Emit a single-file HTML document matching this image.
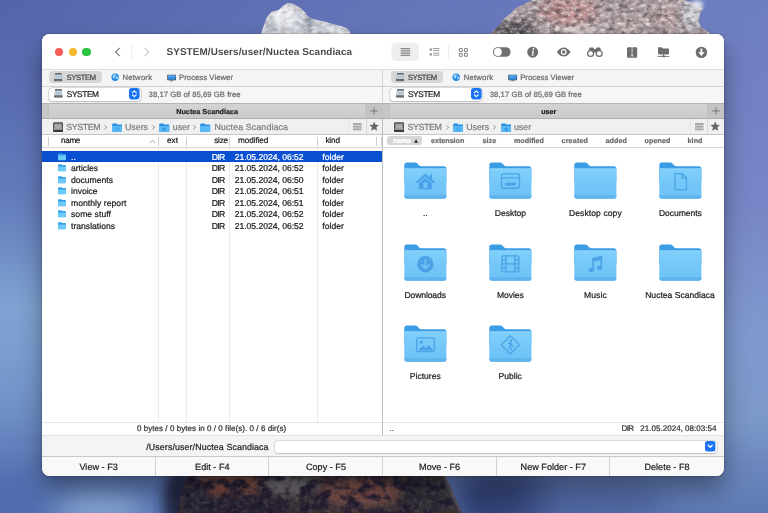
<!DOCTYPE html>
<html>
<head>
<meta charset="utf-8">
<style>
*{box-sizing:border-box;margin:0;padding:0}
html,body{width:768px;height:513px;overflow:hidden;background:#5c70b4}
body{font-family:"Liberation Sans",sans-serif;position:relative;color:#222;-webkit-text-stroke:0.22px;text-rendering:geometricPrecision}
#bg{position:absolute;left:0;top:0;width:768px;height:513px}
#win{position:absolute;left:42px;top:34px;width:682px;height:442.4px;border-radius:7.5px;background:#f4f4f4;overflow:hidden;will-change:transform;
 box-shadow:0 0 0 0.5px rgba(0,0,0,.20),0 14px 24px rgba(0,0,0,.36),0 1px 5px rgba(0,0,0,.10)}
.a{position:absolute}
</style>
</head>
<body>
<svg id="bg" width="768" height="513" viewBox="0 0 768 513">
<defs>
<linearGradient id="skyL" x1="0" y1="0" x2="0" y2="1">
<stop offset="0" stop-color="#5565ab"/><stop offset="0.2" stop-color="#5a6db2"/><stop offset="0.4" stop-color="#657dbc"/><stop offset="0.6" stop-color="#7fa4d3"/><stop offset="0.7" stop-color="#7a9dd0"/><stop offset="0.8" stop-color="#7090c8"/><stop offset="0.93" stop-color="#5773b3"/><stop offset="1" stop-color="#5370b2"/>
</linearGradient>
<linearGradient id="skyR" x1="0" y1="0" x2="0" y2="1">
<stop offset="0" stop-color="#6e7ec0"/><stop offset="0.4" stop-color="#7886c6"/><stop offset="0.66" stop-color="#8099ce"/><stop offset="0.82" stop-color="#7c98c8"/><stop offset="0.9" stop-color="#6d88be"/><stop offset="1" stop-color="#607bb3"/>
</linearGradient>
<linearGradient id="hm" x1="0" y1="0" x2="1" y2="0">
<stop offset="0" stop-color="#fff" stop-opacity="0"/><stop offset="0.5" stop-color="#fff" stop-opacity="0.6"/><stop offset="1" stop-color="#fff" stop-opacity="1"/>
</linearGradient>
<mask id="mR"><rect width="768" height="513" fill="url(#hm)"/></mask>
<filter color-interpolation-filters="sRGB" id="spkW" x="0" y="0" width="100%" height="100%">
<feTurbulence type="fractalNoise" baseFrequency="0.18 0.26" numOctaves="4" seed="7" result="n"/>
<feColorMatrix in="n" type="matrix" values="0 0 0 0 1  0 0 0 0 1  0 0 0 0 1  2.2 0 0 0 -0.95"/>
</filter>
<filter color-interpolation-filters="sRGB" id="spkD" x="0" y="0" width="100%" height="100%">
<feTurbulence type="fractalNoise" baseFrequency="0.16 0.22" numOctaves="4" seed="11" result="n"/>
<feColorMatrix in="n" type="matrix" values="0 0 0 0 0.16  0 0 0 0 0.14  0 0 0 0 0.18  0 2.4 0 0 -0.95"/>
</filter>
<filter color-interpolation-filters="sRGB" id="blobD" x="0" y="0" width="100%" height="100%">
<feTurbulence type="fractalNoise" baseFrequency="0.07 0.1" numOctaves="3" seed="5" result="n"/>
<feColorMatrix in="n" type="matrix" values="0 0 0 0 0.13  0 0 0 0 0.11  0 0 0 0 0.19  4.5 0 0 0 -1.9"/>
</filter>
<filter color-interpolation-filters="sRGB" id="spkL" x="0" y="0" width="100%" height="100%">
<feTurbulence type="fractalNoise" baseFrequency="0.22" numOctaves="3" seed="21" result="n"/>
<feColorMatrix in="n" type="matrix" values="0 0 0 0 0.62  0 0 0 0 0.56  0 0 0 0 0.56  0 0 2.4 0 -1.1"/>
</filter>
<filter id="b2" x="-100%" y="-100%" width="300%" height="300%"><feGaussianBlur stdDeviation="2"/></filter>
<filter id="b4" x="-100%" y="-100%" width="300%" height="300%"><feGaussianBlur stdDeviation="4"/></filter>
<filter id="b6" x="-100%" y="-100%" width="300%" height="300%"><feGaussianBlur stdDeviation="6"/></filter>
<filter id="b12" x="-100%" y="-100%" width="300%" height="300%"><feGaussianBlur stdDeviation="14"/></filter>
<clipPath id="cRockL"><polygon points="260,36 261.5,33 263,28 264.5,24 266.5,18 269,14.5 271.5,12 275,11 278.7,10.3 281,8 283.7,5.5 286,4 288.7,3.3 291.5,3.6 294.4,4.6 297,6 300,7.8 302.5,9.8 305,12.2 307,15 308.7,17.2 311.5,18.4 314.5,19.2 319,20.4 324.5,21.6 330,23.2 336,25 340,26 344.5,27.2 347,28.6 348.8,30.2 350,32.5 350.6,36"/></clipPath>
<clipPath id="cRockR"><polygon points="489,36 491,33.5 495,29.5 499.6,25 502,21.5 504.3,18.5 508,15.5 511.3,13 513.5,10.5 515.3,8.5 519,6.6 523,5 527,2.8 531,0.6 533,0 684.4,0 690,2 697,4.5 703,8 701,11 700,14 699,18 699,22 700,25 701.5,28 705,30 709,32 710,36"/></clipPath>
<clipPath id="cRockB"><polygon points="188,474 444,474 447,480 452,490 455,498 459,506 462,513 178,513 180,500 184,486"/></clipPath>
</defs>
<rect width="768" height="513" fill="url(#skyL)"/>
<rect width="768" height="513" fill="url(#skyR)" mask="url(#mR)"/>
<!-- bottom glow / dark areas -->
<ellipse cx="100" cy="510" rx="48" ry="20" fill="#8eacd6" opacity="0.85" filter="url(#b12)"/>
<ellipse cx="14" cy="496" rx="22" ry="16" fill="#4661a8" opacity="0.5" filter="url(#b12)"/>
<ellipse cx="500" cy="502" rx="48" ry="30" fill="#2b376a" opacity="0.92" filter="url(#b12)"/>
<ellipse cx="585" cy="504" rx="85" ry="20" fill="#43558e" opacity="0.6" filter="url(#b12)"/>
<ellipse cx="180" cy="500" rx="17" ry="30" fill="#24283f" opacity="0.97" filter="url(#b6)"/>
<!-- top-left rock -->
<g clip-path="url(#cRockL)">
 <rect x="255" y="0" width="100" height="40" fill="#d3d6de"/>
 <ellipse cx="284" cy="16" rx="12" ry="11" fill="#eceef3" filter="url(#b2)"/>
 <ellipse cx="270" cy="28" rx="7" ry="8" fill="#c2c6d0" filter="url(#b2)"/>
 <ellipse cx="330" cy="30" rx="16" ry="4" fill="#e2e4ea" filter="url(#b2)"/>
 <path d="M303 12 L307 20 L306 28 L309 36 L312 36 L311 26 L312 20 Z" fill="#707888" filter="url(#b2)" opacity="0.85"/>
 <path d="M318 24 L320 36 L322 36 L321 26 Z" fill="#8c94a4" filter="url(#b2)" opacity="0.7"/>
 <rect x="255" y="0" width="100" height="40" filter="url(#spkW)" opacity="0.7"/>
 <rect x="255" y="0" width="100" height="40" filter="url(#spkD)" opacity="0.22"/>
</g>
<!-- top-right rock -->
<g clip-path="url(#cRockR)">
 <rect x="485" y="0" width="230" height="40" fill="#b3a3a5"/>
 <ellipse cx="516" cy="29" rx="24" ry="10" fill="#5f575b" filter="url(#b4)"/>
 <ellipse cx="508" cy="15" rx="9" ry="4" fill="#c4b8bb" filter="url(#b2)"/>
 <ellipse cx="568" cy="12" rx="30" ry="14" fill="#c09292" filter="url(#b4)"/>
 <ellipse cx="582" cy="31" rx="24" ry="5" fill="#d6c8c8" filter="url(#b2)"/>
 <ellipse cx="545" cy="30" rx="9" ry="5" fill="#c8baba" filter="url(#b2)"/>
 <ellipse cx="630" cy="22" rx="16" ry="9" fill="#c4b0b0" filter="url(#b4)"/>
 <ellipse cx="668" cy="16" rx="14" ry="8" fill="#c2a6a6" filter="url(#b4)"/>
 <ellipse cx="692" cy="14" rx="11" ry="16" fill="#cfcfd6" filter="url(#b4)"/>
 <g fill="none" stroke="#4e4448" stroke-width="1.2" opacity="0.75" filter="url(#b2)">
  <path d="M610 0 L612 12 L611 24 L613 36"/><path d="M628 4 L632 16 L640 24 L641 36"/><path d="M650 0 L648 12 L655 22 L660 36"/><path d="M551 2 L547 14 L541 26 L540 36"/><path d="M676 6 L680 20 L686 34"/>
 </g>
 <rect x="485" y="0" width="230" height="40" filter="url(#spkW)" opacity="0.8"/>
 <rect x="485" y="0" width="230" height="40" filter="url(#spkD)" opacity="0.5"/>
</g>
<ellipse cx="697" cy="5" rx="6" ry="4.5" fill="#e8ecf4" opacity="0.95" filter="url(#b2)"/>
<!-- bottom rock -->
<g clip-path="url(#cRockB)">
 <rect x="170" y="470" width="300" height="45" fill="#393036"/>
 <ellipse cx="228" cy="486" rx="36" ry="10" fill="#7c4a3e" filter="url(#b4)"/>
 <ellipse cx="290" cy="486" rx="30" ry="10" fill="#6c696e" filter="url(#b4)"/>
 <ellipse cx="360" cy="492" rx="40" ry="14" fill="#7a4e46" filter="url(#b4)"/>
 <ellipse cx="428" cy="494" rx="22" ry="22" fill="#323238" filter="url(#b4)"/>
 <ellipse cx="240" cy="508" rx="50" ry="10" fill="#262034" filter="url(#b4)"/>
 <ellipse cx="196" cy="500" rx="12" ry="20" fill="#2c2a3a" filter="url(#b4)"/>
 <rect x="170" y="470" width="300" height="45" filter="url(#blobD)" opacity="0.95"/>
 <rect x="170" y="470" width="300" height="45" filter="url(#spkL)" opacity="0.26"/>
 <path d="M444,474 L447,480 452,490 455,498 459,506 462,513" fill="none" stroke="#8a8286" stroke-width="3" filter="url(#b2)"/>
</g>
</svg>

<svg width="0" height="0" style="position:absolute">
<defs>

<linearGradient id="fb" x1="0" y1="0" x2="0" y2="1"><stop offset="0" stop-color="#80d0fb"/><stop offset="0.5" stop-color="#74c7f8"/><stop offset="1" stop-color="#6cc1f6"/></linearGradient>
<symbol id="bigfold" viewBox="0 0 43 37">
 <path d="M0.3 3 Q0.3 0.3 3 0.3 L11 0.3 Q12.6 0.3 13.6 1.5 L15.3 3.4 Q16.1 4.2 17.5 4.2 L39.8 4.2 Q42.7 4.2 42.7 7.2 L42.7 20 L0.3 20 Z" fill="#3b9de5"/>
 <path d="M0.3 8 Q0.3 6.4 1.9 6.4 L41.1 6.4 Q42.7 6.4 42.7 8 L42.7 34 Q42.7 36.8 39.9 36.8 L3.1 36.8 Q0.3 36.8 0.3 34 Z" fill="url(#fb)"/>
 <path d="M0.3 33.4 L42.7 33.4 L42.7 34 Q42.7 36.8 39.9 36.8 L3.1 36.8 Q0.3 36.8 0.3 34 Z" fill="#5fb3ef"/>
 <rect x="0.3" y="6.4" width="42.4" height="0.7" rx="0.35" fill="#a4defc" opacity="0.8"/>
</symbol>
<symbol id="g-none" viewBox="0 0 43 37"></symbol>
<symbol id="g-home" viewBox="0 0 43 37"><g fill="#4aa3e6"><path d="M21.5 13.2 L12.6 21.2 L14 22.6 L21.5 16 L29 22.6 L30.4 21.2 L27.6 18.6 L27.6 14.4 L25.6 14.4 L25.6 16.8 Z"/><path d="M15.4 22.4 L21.5 17.2 L27.6 22.4 L27.6 28 L15.4 28 Z M19.8 21.6 L19.8 26.6 L23.2 26.6 L23.2 21.6 Z" fill-rule="evenodd"/></g></symbol>
<symbol id="g-desktop" viewBox="0 0 43 37"><g fill="none" stroke="#4aa3e6" stroke-width="1.2"><rect x="13.2" y="13.6" width="16.8" height="13.4" rx="2"/><path d="M13.2 17.4 H30"/></g><rect x="16.6" y="21.8" width="10" height="2.6" rx="0.6" fill="#4aa3e6"/></symbol>
<symbol id="g-doc" viewBox="0 0 43 37"><path d="M16.4 13.4 L23.2 13.4 L27.2 17.4 L27.2 27.6 Q27.2 28.6 26.2 28.6 L17.4 28.6 Q16.4 28.6 16.4 27.6 Z M23 13.6 L23 17.6 L27 17.6" fill="none" stroke="#4aa3e6" stroke-width="1.2" stroke-linejoin="round"/></symbol>
<symbol id="g-down" viewBox="0 0 43 37"><circle cx="21.5" cy="21.4" r="7.6" fill="#4aa3e6"/><path d="M21.5 17 V25 M18.2 22 L21.5 25.3 L24.8 22" fill="none" stroke="#74c3f6" stroke-width="1.6" stroke-linecap="round" stroke-linejoin="round"/></symbol>
<symbol id="g-movie" viewBox="0 0 43 37"><g fill="none" stroke="#4aa3e6" stroke-width="1.2"><rect x="13.6" y="13.6" width="15.8" height="15" rx="1.6"/><path d="M17.4 13.6 V28.6 M25.6 13.6 V28.6 M17.4 21.1 H25.6 M13.6 17.4 H17.4 M13.6 21.1 H17.4 M13.6 24.8 H17.4 M25.6 17.4 H29.4 M25.6 21.1 H29.4 M25.6 24.8 H29.4"/></g></symbol>
<symbol id="g-music" viewBox="0 0 43 37"><g fill="#4aa3e6"><path d="M18.6 15.6 L27.8 13.4 L27.8 24.6 L26.2 24.6 L26.2 17.4 L20.2 18.8 L20.2 26.6 L18.6 26.6 Z"/><ellipse cx="17.8" cy="26.6" rx="2.5" ry="2"/><ellipse cx="25.4" cy="24.6" rx="2.5" ry="2"/></g></symbol>
<symbol id="g-pic" viewBox="0 0 43 37"><rect x="13.4" y="14.6" width="16.4" height="12.8" rx="1.6" fill="none" stroke="#4aa3e6" stroke-width="1.2"/><circle cx="17.6" cy="18.6" r="1.5" fill="#4aa3e6"/><path d="M14.6 26.2 L19.4 21.6 L22 24 L24.6 21 L28.8 26.2 Z" fill="#4aa3e6"/></symbol>
<symbol id="g-public" viewBox="0 0 43 37"><path d="M21.5 12.6 L30 21.1 L21.5 29.6 L13 21.1 Z" fill="none" stroke="#4aa3e6" stroke-width="1.2" stroke-linejoin="round"/><circle cx="22.2" cy="17.2" r="1.1" fill="#4aa3e6"/><path d="M19.6 20 L21.8 18.8 L22.6 21.4 L24.4 22.4 M21.8 19 L21.2 22.4 L22.6 24 L22.4 26.2 M21.2 22.4 L19.6 25.4" fill="none" stroke="#4aa3e6" stroke-width="1" stroke-linecap="round"/></symbol>
<symbol id="i-hdd" viewBox="0 0 10 10">
 <rect x="0.1" y="0.2" width="9.8" height="9.6" rx="1.3" fill="#474747"/>
 <rect x="1" y="1.2" width="8" height="5.4" rx="0.7" fill="#858585"/>
 <rect x="1.9" y="2.4" width="6.2" height="3.4" rx="0.4" fill="#a9adb2"/>
 <rect x="0.9" y="6.2" width="8.2" height="1.5" fill="#b4c0c8"/>
 <rect x="0.1" y="7.7" width="9.8" height="2.1" rx="1" fill="#3a3a3a"/>
</symbol>


<symbol id="i-fold-users" viewBox="0 0 10 10" preserveAspectRatio="none">
 <path d="M0.2 1.4 Q0.2 0.4 1.2 0.4 L3.6 0.4 Q4.1 0.4 4.5 0.9 L5 1.5 L8.8 1.5 Q9.8 1.5 9.8 2.5 L9.8 8.6 Q9.8 9.6 8.8 9.6 L1.2 9.6 Q0.2 9.6 0.2 8.6 Z" fill="#2a8fe2"/>
 <path d="M0.2 3.2 L9.8 3.2 L9.8 8.6 Q9.8 9.6 8.8 9.6 L1.2 9.6 Q0.2 9.6 0.2 8.6 Z" fill="#5abaf6"/>
 <g fill="#2f90e4" opacity="0.85"><circle cx="4.2" cy="5.3" r="0.85"/><circle cx="6.3" cy="5.5" r="0.7"/><path d="M2.8 7.9 Q4.2 5.7 5.6 7.9 Z M5.4 7.7 Q6.4 6.3 7.5 7.7 Z"/></g>
</symbol>
<symbol id="i-fold-home" viewBox="0 0 10 10" preserveAspectRatio="none">
 <path d="M0.2 1.4 Q0.2 0.4 1.2 0.4 L3.6 0.4 Q4.1 0.4 4.5 0.9 L5 1.5 L8.8 1.5 Q9.8 1.5 9.8 2.5 L9.8 8.6 Q9.8 9.6 8.8 9.6 L1.2 9.6 Q0.2 9.6 0.2 8.6 Z" fill="#2a8fe2"/>
 <path d="M0.2 3.2 L9.8 3.2 L9.8 8.6 Q9.8 9.6 8.8 9.6 L1.2 9.6 Q0.2 9.6 0.2 8.6 Z" fill="#5abaf6"/>
 <path d="M5 4.4 L7.2 6.3 L6.5 6.3 L6.5 8 L3.5 8 L3.5 6.3 L2.8 6.3 Z" fill="#2f90e4" opacity="0.85"/>
</symbol>
<symbol id="i-fold-c" viewBox="0 0 10 10" preserveAspectRatio="none">
 <path d="M0.2 1.4 Q0.2 0.4 1.2 0.4 L3.6 0.4 Q4.1 0.4 4.5 0.9 L5 1.5 L8.8 1.5 Q9.8 1.5 9.8 2.5 L9.8 8.6 Q9.8 9.6 8.8 9.6 L1.2 9.6 Q0.2 9.6 0.2 8.6 Z" fill="#2a8fe2"/>
 <path d="M0.2 3.2 L9.8 3.2 L9.8 8.6 Q9.8 9.6 8.8 9.6 L1.2 9.6 Q0.2 9.6 0.2 8.6 Z" fill="#5abaf6"/>
 
</symbol>
<symbol id="i-fold-s" viewBox="0 0 10 10" preserveAspectRatio="none">
 <path d="M0.1 1.6 Q0.1 0.3 1.3 0.3 L3.9 0.3 Q4.4 0.3 4.8 0.9 L5.2 1.4 L8.7 1.4 Q9.9 1.4 9.9 2.7 L9.9 8.5 Q9.9 9.8 8.7 9.8 L1.3 9.8 Q0.1 9.8 0.1 8.5 Z" fill="#2f9ee8"/>
 <path d="M0.1 3.3 L9.9 3.3 L9.9 8.5 Q9.9 9.8 8.7 9.8 L1.3 9.8 Q0.1 9.8 0.1 8.5 Z" fill="#6dcaf9"/>
 <path d="M0.1 8.5 Q0.1 9.8 1.3 9.8 L8.7 9.8 Q9.9 9.8 9.9 8.5 L9.9 8.2 Q9.9 9.2 8.7 9.2 L1.3 9.2 Q0.1 9.2 0.1 8.2 Z" fill="#48aeee"/>
</symbol>
<symbol id="i-disk" viewBox="0 0 10 10">
 <path d="M1.3 0.4 L8.7 0.4 L9.8 8.6 Q9.8 9.7 8.8 9.7 L1.2 9.7 Q0.2 9.7 0.2 8.6 Z" fill="#8f989e"/>
 <path d="M1.6 1.2 L8.4 1.2 L9.2 7.6 L0.8 7.6 Z" fill="#cbd9e2"/>
 <path d="M2.4 3.2 L7.6 3.2 L7.9 6.2 L2.1 6.2 Z" fill="#b4c6d2"/>
 <path d="M1.3 0.3 L8.7 0.3 L8.85 1.7 L1.15 1.7 Z" fill="#555"/>
 <path d="M0.45 7.4 L9.55 7.4 L9.8 8.6 Q9.8 9.7 8.8 9.7 L1.2 9.7 Q0.2 9.7 0.2 8.6 Z" fill="#484848"/>
 <rect x="1.4" y="8.2" width="7.2" height="0.7" rx="0.3" fill="#9a9a9a"/>
</symbol>
<symbol id="i-globe" viewBox="0 0 10 10">
 <circle cx="5" cy="5" r="4.4" fill="#1f86e4"/>
 <circle cx="4.2" cy="4" r="3" fill="#3c9cf0" opacity="0.7"/>
 <path d="M3 2 L5.2 1.5 L5.9 3.1 L4.5 4.2 L4.9 5.8 L3.7 7 L2.3 5.2 L2.1 3.4 Z" fill="#a6d6f8"/>
 <path d="M6.6 4.3 L8.6 4.1 L8.5 6.3 L7.1 7.8 L6.2 6.2 Z" fill="#a6d6f8"/>
</symbol>
<symbol id="i-mon" viewBox="0 0 10 10">
 <rect x="0.3" y="1.8" width="9.4" height="6" rx="0.7" fill="#3a4450"/>
 <rect x="1" y="2.5" width="8" height="4.6" fill="#3e8fe2"/>
 <rect x="1" y="2.5" width="8" height="1.6" fill="#5aa6ee"/>
 <rect x="3.4" y="7.8" width="3.2" height="0.9" fill="#5a5a5a"/>
</symbol>
<symbol id="i-fold" viewBox="0 0 10 10">
 <path d="M0.5 2.1 Q0.5 1.4 1.2 1.4 L3.6 1.4 L4.4 2.2 L8.8 2.2 Q9.5 2.2 9.5 2.9 L9.5 8 Q9.5 8.7 8.8 8.7 L1.2 8.7 Q0.5 8.7 0.5 8 Z" fill="#3d9fe4"/>
 <path d="M0.5 3.5 L9.5 3.5 L9.5 8 Q9.5 8.7 8.8 8.7 L1.2 8.7 Q0.5 8.7 0.5 8 Z" fill="#74c4f7"/>
</symbol>
</defs>
</svg>
<div id="win">
<div class="a" style="left:0.00px;top:0.00px;width:682.00px;height:35.30px;background:#fff;"></div>
<div class="a" style="left:12.90px;top:13.70px;width:8.6px;height:8.6px;border-radius:50%;background:#fb5b58"></div>
<div class="a" style="left:26.60px;top:13.70px;width:8.6px;height:8.6px;border-radius:50%;background:#f6b82c"></div>
<div class="a" style="left:40.10px;top:13.70px;width:8.6px;height:8.6px;border-radius:50%;background:#2bc43f"></div>
<svg class="a" style="left:0;top:0" width="682" height="35" viewBox="0 0 682 35">
   <path d="M77.6 14.2 L73.6 18 L77.6 21.8" fill="none" stroke="#757575" stroke-width="1.05" stroke-linecap="round" stroke-linejoin="round"/>
   <path d="M102.8 14.2 L106.8 18 L102.8 21.8" fill="none" stroke="#c8c8c8" stroke-width="1.05" stroke-linecap="round" stroke-linejoin="round"/>
   <rect x="89.3" y="11" width="0.8" height="14" fill="#ececec"/>
   <!-- view mode -->
   <rect x="349.5" y="8.5" width="27.5" height="18.5" rx="4.5" fill="#efefef"/>
   <g fill="#8a8a8a"><rect x="358.6" y="14" width="9.6" height="1.3"/><rect x="358.6" y="16.2" width="9.6" height="1.3"/><rect x="358.6" y="18.4" width="9.6" height="1.3"/><rect x="358.6" y="20.6" width="9.6" height="1.3"/></g>
   <g fill="#9a9a9a"><circle cx="388.8" cy="15.6" r="1.35"/><circle cx="388.8" cy="20.4" r="1.35"/>
    <rect x="391.2" y="14" width="6.2" height="1"/><rect x="391.2" y="16" width="6.2" height="1"/><rect x="391.2" y="18.6" width="6.2" height="1"/><rect x="391.2" y="20.6" width="6.2" height="1"/></g>
   <rect x="406.3" y="11.5" width="0.7" height="12.5" fill="#e2e2e2"/>
   <g fill="none" stroke="#858585" stroke-width="1"><rect x="417.4" y="14.5" width="2.9" height="2.9" rx="0.2"/><rect x="422.5" y="14.5" width="2.9" height="2.9" rx="0.2"/><rect x="417.4" y="19.4" width="2.9" height="2.9" rx="0.2"/><rect x="422.5" y="19.4" width="2.9" height="2.9" rx="0.2"/></g>
   <!-- toggle -->
   <rect x="451" y="13.2" width="17.6" height="9.6" rx="4.8" fill="#707070"/>
   <circle cx="455.9" cy="18" r="3.9" fill="#fff"/>
   <!-- info -->
   <circle cx="490.7" cy="18.2" r="5.5" fill="#6e6e6e"/>
   <path d="M490.2 16.8 L491.9 16.8 L491.2 21 L491.9 21 L491.8 21.6 L489.4 21.6 L489.5 21 L490 21 L490.5 17.6 L489.9 17.6 Z" fill="#fff"/>
   <circle cx="491.4" cy="14.9" r="0.9" fill="#fff"/>
   <!-- eye -->
   <path d="M514.8 18 Q518 13.4 521.7 13.4 Q525.4 13.4 528.6 18 Q525.4 22.6 521.7 22.6 Q518 22.6 514.8 18 Z" fill="#6e6e6e"/>
   <circle cx="521.7" cy="18" r="2.9" fill="#fff"/>
   <circle cx="521.7" cy="18" r="1.7" fill="#6e6e6e"/>
   <!-- binoculars -->
   <g fill="#6e6e6e"><circle cx="548.6" cy="19.5" r="3.6"/><circle cx="557.2" cy="19.5" r="3.6"/>
    <path d="M546.5 16 L548 13.4 L551.3 13.4 L552 15 L553.8 15 L554.5 13.4 L557.8 13.4 L559.3 16 L556 17 L553.9 18.4 L551.9 18.4 L549.8 17 Z"/></g>
   <circle cx="548.6" cy="19.5" r="2.3" fill="#fff"/><circle cx="557.2" cy="19.5" r="2.3" fill="#fff"/>
   <!-- archive -->
   <rect x="585" y="13.3" width="10.2" height="10.4" rx="1" fill="#6e6e6e"/>
   <g fill="#fff"><rect x="589.6" y="13.3" width="1" height="1.1"/><rect x="589.6" y="15" width="1" height="1.1"/><rect x="589.6" y="16.7" width="1" height="1.1"/><rect x="589.6" y="18.4" width="1" height="1.1"/><rect x="589.4" y="20.2" width="1.4" height="2.2" rx="0.4"/></g>
   <!-- network folder -->
   <g fill="#6e6e6e"><path d="M616 14.1 Q616 13.3 616.8 13.3 L619.8 13.3 L620.8 14.4 L626.2 14.4 Q627 14.4 627 15.2 L627 19.6 Q627 20.4 626.2 20.4 L616.8 20.4 Q616 20.4 616 19.6 Z"/>
    <rect x="621" y="20.4" width="1" height="1.6"/><rect x="619.8" y="21.6" width="3.4" height="1.6"/><rect x="615.6" y="22" width="11.8" height="0.8"/></g>
   <!-- download -->
   <circle cx="659.4" cy="18.4" r="5.7" fill="#6e6e6e"/>
   <path d="M658.5 14.6 L660.3 14.6 L660.3 18.3 L662.6 18.3 L659.4 22 L656.2 18.3 L658.5 18.3 Z" fill="#fff"/>
  </svg>
<span style="position:absolute;white-space:pre;line-height:1;font-size:9.9px;color:#4a4a4a;top:13.55px;font-weight:bold;letter-spacing:0.116px;left:124.50px;-webkit-text-stroke:0;">SYSTEM/Users/user/Nuctea Scandiaca</span>
<div class="a" style="left:0.00px;top:35.00px;width:682.00px;height:1.00px;background:#dedede;"></div>
<div class="a" style="left:0.00px;top:36.00px;width:682.00px;height:16.00px;background:#f4f4f4;"></div>
<div class="a" style="left:0.00px;top:52.00px;width:682.00px;height:1.00px;background:#d2d2d2;"></div>
<div class="a" style="left:0.00px;top:53.00px;width:682.00px;height:16.20px;background:#f6f6f6;"></div>
<div class="a" style="left:7.40px;top:37.30px;width:52.80px;height:12.00px;background:#d6d6d6;border-radius:3.8px"></div>
<svg class="a" style="left:12.30px;top:39.20px" width="8.5" height="8.5"><use href="#i-disk"/></svg>
<span style="position:absolute;white-space:pre;line-height:1;font-size:7.7px;color:#4a4a4a;top:39.65px;letter-spacing:-0.405px;left:24.50px;">SYSTEM</span>
<svg class="a" style="left:69.20px;top:39.20px" width="8.4" height="8.4"><use href="#i-globe"/></svg>
<span style="position:absolute;white-space:pre;line-height:1;font-size:7.7px;color:#6a6a6a;top:39.65px;letter-spacing:0.216px;left:80.50px;">Network</span>
<svg class="a" style="left:125.00px;top:38.80px" width="9.4" height="9.4"><use href="#i-mon"/></svg>
<span style="position:absolute;white-space:pre;line-height:1;font-size:7.7px;color:#6a6a6a;top:39.65px;letter-spacing:0.056px;left:137.00px;">Process Viewer</span>
<div class="a" style="left:7.00px;top:53.80px;width:92.00px;height:13.20px;background:#fff;border-radius:3.5px;box-shadow:0 0 0 0.5px rgba(0,0,0,.16),0 0.6px 1.6px rgba(0,0,0,.28)"></div>
<svg class="a" style="left:12.40px;top:55.40px" width="8.8" height="8.8"><use href="#i-disk"/></svg>
<span style="position:absolute;white-space:pre;line-height:1;font-size:8.3px;color:#1e1e1e;top:55.85px;letter-spacing:-0.375px;left:24.75px;">SYSTEM</span>
<svg class="a" style="left:87.30px;top:54.40px" width="11" height="12" viewBox="0 0 11 12"><rect x="0" y="0" width="10.6" height="11.4" rx="2.8" fill="#1a74f4"/><path d="M3.4 4.6 L5.3 2.8 L7.2 4.6 M3.4 6.9 L5.3 8.7 L7.2 6.9" fill="none" stroke="#fff" stroke-width="1.15" stroke-linecap="round" stroke-linejoin="round"/></svg>
<span style="position:absolute;white-space:pre;line-height:1;font-size:7.7px;color:#6a6a6a;top:56.65px;letter-spacing:0.036px;left:106.60px;">38,17 GB of 85,69 GB free</span>
<div class="a" style="left:348.60px;top:37.30px;width:52.80px;height:12.00px;background:#d6d6d6;border-radius:3.8px"></div>
<svg class="a" style="left:353.50px;top:39.20px" width="8.5" height="8.5"><use href="#i-disk"/></svg>
<span style="position:absolute;white-space:pre;line-height:1;font-size:7.7px;color:#4a4a4a;top:39.65px;letter-spacing:-0.405px;left:365.70px;">SYSTEM</span>
<svg class="a" style="left:410.40px;top:39.20px" width="8.4" height="8.4"><use href="#i-globe"/></svg>
<span style="position:absolute;white-space:pre;line-height:1;font-size:7.7px;color:#6a6a6a;top:39.65px;letter-spacing:0.216px;left:421.70px;">Network</span>
<svg class="a" style="left:466.20px;top:38.80px" width="9.4" height="9.4"><use href="#i-mon"/></svg>
<span style="position:absolute;white-space:pre;line-height:1;font-size:7.7px;color:#6a6a6a;top:39.65px;letter-spacing:0.056px;left:478.20px;">Process Viewer</span>
<div class="a" style="left:348.20px;top:53.80px;width:92.00px;height:13.20px;background:#fff;border-radius:3.5px;box-shadow:0 0 0 0.5px rgba(0,0,0,.16),0 0.6px 1.6px rgba(0,0,0,.28)"></div>
<svg class="a" style="left:353.60px;top:55.40px" width="8.8" height="8.8"><use href="#i-disk"/></svg>
<span style="position:absolute;white-space:pre;line-height:1;font-size:8.3px;color:#1e1e1e;top:55.85px;letter-spacing:-0.375px;left:365.95px;">SYSTEM</span>
<svg class="a" style="left:428.50px;top:54.40px" width="11" height="12" viewBox="0 0 11 12"><rect x="0" y="0" width="10.6" height="11.4" rx="2.8" fill="#1a74f4"/><path d="M3.4 4.6 L5.3 2.8 L7.2 4.6 M3.4 6.9 L5.3 8.7 L7.2 6.9" fill="none" stroke="#fff" stroke-width="1.15" stroke-linecap="round" stroke-linejoin="round"/></svg>
<span style="position:absolute;white-space:pre;line-height:1;font-size:7.7px;color:#6a6a6a;top:56.65px;letter-spacing:0.036px;left:447.80px;">38,17 GB of 85,69 GB free</span>
<div class="a" style="left:0.00px;top:69.10px;width:340.40px;height:15.70px;background:#c7c7c7;border-top:0.8px solid #b2b2b2;border-bottom:0.8px solid #adadad"></div>
<div class="a" style="left:6.00px;top:69.10px;width:317.80px;height:15.70px;background:linear-gradient(#d3d3d3,#cbcbcb);border-top:0.8px solid #b4b4b4;border-bottom:0.8px solid #aeaeae;border-left:0.6px solid #c0c0c0"></div>
<div class="a" style="left:323.40px;top:69.10px;width:17.00px;height:15.70px;background:#c3c3c3;border-top:0.8px solid #b0b0b0;border-bottom:0.8px solid #acacac"></div>
<svg class="a" style="left:327.10px;top:72.40px" width="10" height="10" viewBox="0 0 10 10"><path d="M5 1.2 V8.8 M1.2 5 H8.8" stroke="#5a5a5a" stroke-width="0.7" fill="none"/></svg>
<span style="position:absolute;white-space:pre;line-height:1;font-size:7.2px;color:#1e1e1e;top:73.90px;font-weight:bold;letter-spacing:0.021px;left:134.25px;">Nuctea Scandiaca</span>
<div class="a" style="left:0.00px;top:85.10px;width:340.40px;height:15.20px;background:#f0f0f0;"></div>
<div class="a" style="left:0.00px;top:100.20px;width:340.40px;height:0.90px;background:#c6c6c6;"></div>
<svg class="a" style="left:10.90px;top:87.90px" width="10.2" height="10.2"><use href="#i-hdd"/></svg>
<span style="position:absolute;white-space:pre;line-height:1;font-size:8.8px;color:#7c7c7c;top:88.60px;letter-spacing:-0.354px;left:24.20px;">SYSTEM</span>
<svg class="a" style="left:62.30px;top:91.20px" width="3.4" height="4.6" viewBox="0 0 3.4 4.6"><path d="M0.6 0.5 L2.7 2.3 L0.6 4.1" fill="none" stroke="#858585" stroke-width="0.8" stroke-linecap="round" stroke-linejoin="round"/></svg>
<svg class="a" style="left:69.60px;top:88.60px" width="10.6" height="9.6" viewBox="0 0 10 10" preserveAspectRatio="none"><use href="#i-fold-users"/></svg>
<span style="position:absolute;white-space:pre;line-height:1;font-size:8.8px;color:#7c7c7c;top:88.60px;left:83.00px;">Users</span>
<svg class="a" style="left:109.80px;top:91.20px" width="3.4" height="4.6" viewBox="0 0 3.4 4.6"><path d="M0.6 0.5 L2.7 2.3 L0.6 4.1" fill="none" stroke="#858585" stroke-width="0.8" stroke-linecap="round" stroke-linejoin="round"/></svg>
<svg class="a" style="left:117.30px;top:88.60px" width="10.6" height="9.6" viewBox="0 0 10 10" preserveAspectRatio="none"><use href="#i-fold-home"/></svg>
<span style="position:absolute;white-space:pre;line-height:1;font-size:8.8px;color:#7c7c7c;top:88.60px;letter-spacing:0.042px;left:130.75px;">user</span>
<svg class="a" style="left:151.00px;top:91.20px" width="3.4" height="4.6" viewBox="0 0 3.4 4.6"><path d="M0.6 0.5 L2.7 2.3 L0.6 4.1" fill="none" stroke="#858585" stroke-width="0.8" stroke-linecap="round" stroke-linejoin="round"/></svg>
<svg class="a" style="left:158.40px;top:88.60px" width="10.6" height="9.6" viewBox="0 0 10 10" preserveAspectRatio="none"><use href="#i-fold-c"/></svg>
<span style="position:absolute;white-space:pre;line-height:1;font-size:8.8px;color:#7c7c7c;top:88.60px;letter-spacing:0.140px;left:172.50px;">Nuctea Scandiaca</span>
<svg class="a" style="left:311.10px;top:88.50px" width="9" height="8" viewBox="0 0 9 8"><rect x="0" y="0" width="8.6" height="2.1" fill="#aaa"/><rect x="0" y="2.65" width="8.6" height="2.1" fill="#aaa"/><rect x="0" y="5.3" width="8.6" height="2.1" fill="#aaa"/></svg>
<div class="a" style="left:323.80px;top:85.10px;width:0.90px;height:15.20px;background:#d8d8d8;"></div>
<div class="a" style="left:306.00px;top:85.10px;width:0.80px;height:15.20px;background:#e4e4e4;"></div>
<svg class="a" style="left:326.80px;top:87.40px" width="10.4" height="10.4" viewBox="0 0 10 10"><path d="M5 0.6 L6.3 3.7 L9.6 3.9 L7.1 6.1 L7.9 9.4 L5 7.6 L2.1 9.4 L2.9 6.1 L0.4 3.9 L3.7 3.7 Z" fill="#666"/></svg>
<div class="a" style="left:341.00px;top:69.10px;width:341.00px;height:15.70px;background:#c7c7c7;border-top:0.8px solid #b2b2b2;border-bottom:0.8px solid #adadad"></div>
<div class="a" style="left:347.00px;top:69.10px;width:318.40px;height:15.70px;background:linear-gradient(#d3d3d3,#cbcbcb);border-top:0.8px solid #b4b4b4;border-bottom:0.8px solid #aeaeae;border-left:0.6px solid #c0c0c0"></div>
<div class="a" style="left:665.00px;top:69.10px;width:17.00px;height:15.70px;background:#c3c3c3;border-top:0.8px solid #b0b0b0;border-bottom:0.8px solid #acacac"></div>
<svg class="a" style="left:668.70px;top:72.40px" width="10" height="10" viewBox="0 0 10 10"><path d="M5 1.2 V8.8 M1.2 5 H8.8" stroke="#5a5a5a" stroke-width="0.7" fill="none"/></svg>
<span style="position:absolute;white-space:pre;line-height:1;font-size:7.2px;color:#1e1e1e;top:73.90px;font-weight:bold;letter-spacing:-0.062px;left:499.25px;">user</span>
<div class="a" style="left:341.00px;top:85.10px;width:341.00px;height:15.20px;background:#f0f0f0;"></div>
<div class="a" style="left:341.00px;top:100.20px;width:341.00px;height:0.90px;background:#c6c6c6;"></div>
<svg class="a" style="left:352.10px;top:87.90px" width="10.2" height="10.2"><use href="#i-hdd"/></svg>
<span style="position:absolute;white-space:pre;line-height:1;font-size:8.8px;color:#7c7c7c;top:88.60px;letter-spacing:-0.354px;left:365.40px;">SYSTEM</span>
<svg class="a" style="left:403.50px;top:91.20px" width="3.4" height="4.6" viewBox="0 0 3.4 4.6"><path d="M0.6 0.5 L2.7 2.3 L0.6 4.1" fill="none" stroke="#858585" stroke-width="0.8" stroke-linecap="round" stroke-linejoin="round"/></svg>
<svg class="a" style="left:410.80px;top:88.60px" width="10.6" height="9.6" viewBox="0 0 10 10" preserveAspectRatio="none"><use href="#i-fold-users"/></svg>
<span style="position:absolute;white-space:pre;line-height:1;font-size:8.8px;color:#7c7c7c;top:88.60px;left:424.20px;">Users</span>
<svg class="a" style="left:451.00px;top:91.20px" width="3.4" height="4.6" viewBox="0 0 3.4 4.6"><path d="M0.6 0.5 L2.7 2.3 L0.6 4.1" fill="none" stroke="#858585" stroke-width="0.8" stroke-linecap="round" stroke-linejoin="round"/></svg>
<svg class="a" style="left:458.50px;top:88.60px" width="10.6" height="9.6" viewBox="0 0 10 10" preserveAspectRatio="none"><use href="#i-fold-home"/></svg>
<span style="position:absolute;white-space:pre;line-height:1;font-size:8.8px;color:#7c7c7c;top:88.60px;letter-spacing:0.042px;left:471.95px;">user</span>
<svg class="a" style="left:652.70px;top:88.50px" width="9" height="8" viewBox="0 0 9 8"><rect x="0" y="0" width="8.6" height="2.1" fill="#aaa"/><rect x="0" y="2.65" width="8.6" height="2.1" fill="#aaa"/><rect x="0" y="5.3" width="8.6" height="2.1" fill="#aaa"/></svg>
<div class="a" style="left:665.40px;top:85.10px;width:0.90px;height:15.20px;background:#d8d8d8;"></div>
<div class="a" style="left:647.60px;top:85.10px;width:0.80px;height:15.20px;background:#e4e4e4;"></div>
<svg class="a" style="left:668.40px;top:87.40px" width="10.4" height="10.4" viewBox="0 0 10 10"><path d="M5 0.6 L6.3 3.7 L9.6 3.9 L7.1 6.1 L7.9 9.4 L5 7.6 L2.1 9.4 L2.9 6.1 L0.4 3.9 L3.7 3.7 Z" fill="#666"/></svg>
<div class="a" style="left:0.00px;top:101.10px;width:340.40px;height:12.20px;background:#fff;"></div>
<div class="a" style="left:0.00px;top:113.30px;width:340.40px;height:0.90px;background:#d8d8d8;"></div>
<div class="a" style="left:0.00px;top:114.20px;width:340.40px;height:274.00px;background:#fff;"></div>
<div class="a" style="left:6.00px;top:103.20px;width:0.90px;height:8.60px;background:#cfcfcf;"></div>
<div class="a" style="left:116.00px;top:103.20px;width:0.90px;height:8.60px;background:#cfcfcf;"></div>
<div class="a" style="left:143.70px;top:103.20px;width:0.90px;height:8.60px;background:#cfcfcf;"></div>
<div class="a" style="left:187.30px;top:103.20px;width:0.90px;height:8.60px;background:#cfcfcf;"></div>
<div class="a" style="left:275.30px;top:103.20px;width:0.90px;height:8.60px;background:#cfcfcf;"></div>
<div class="a" style="left:333.80px;top:103.20px;width:0.90px;height:8.60px;background:#cfcfcf;"></div>
<div class="a" style="left:339.00px;top:103.20px;width:0.90px;height:8.60px;background:#cfcfcf;"></div>
<div class="a" style="left:116.00px;top:114.20px;width:0.90px;height:274.00px;background:#ebebeb;"></div>
<div class="a" style="left:143.70px;top:114.20px;width:0.90px;height:274.00px;background:#ebebeb;"></div>
<div class="a" style="left:187.30px;top:114.20px;width:0.90px;height:274.00px;background:#ebebeb;"></div>
<div class="a" style="left:275.30px;top:114.20px;width:0.90px;height:274.00px;background:#ebebeb;"></div>
<span style="position:absolute;white-space:pre;line-height:1;font-size:8.2px;color:#222;top:103.40px;letter-spacing:-0.361px;left:19.00px;">name</span>
<svg class="a" style="left:107px;top:104.80000000000001px" width="7" height="5" viewBox="0 0 7 5"><path d="M0.8 4 L3.5 1.2 L6.2 4" fill="none" stroke="#8a8a8a" stroke-width="0.8"/></svg>
<span style="position:absolute;white-space:pre;line-height:1;font-size:8.2px;color:#222;top:103.40px;letter-spacing:0.031px;left:125.00px;">ext</span>
<span style="position:absolute;white-space:pre;line-height:1;font-size:8.2px;color:#222;top:103.40px;letter-spacing:-0.288px;right:496.29px;">size</span>
<span style="position:absolute;white-space:pre;line-height:1;font-size:8.2px;color:#222;top:103.40px;letter-spacing:-0.079px;left:196.00px;">modified</span>
<span style="position:absolute;white-space:pre;line-height:1;font-size:8.2px;color:#222;top:103.40px;letter-spacing:-0.144px;left:283.40px;">kind</span>
<div class="a" style="left:0.00px;top:116.90px;width:340.40px;height:11.50px;background:#0a50d2;box-shadow:inset 0 0.5px 0 #0444c4,inset 0 -0.5px 0 #0444c4"></div>
<svg class="a" style="left:15.70px;top:119.10px" width="8.1" height="7.5" viewBox="0 0 10 10" preserveAspectRatio="none"><use href="#i-fold-s"/></svg>
<span style="position:absolute;white-space:pre;line-height:1;font-size:8.6px;color:#fff;top:118.70px;left:29.00px;">..</span>
<span style="position:absolute;white-space:pre;line-height:1;font-size:8.6px;color:#fff;top:118.70px;letter-spacing:-0.600px;right:499.35px;">DIR</span>
<span style="position:absolute;white-space:pre;line-height:1;font-size:8.6px;color:#fff;top:118.70px;letter-spacing:-0.025px;left:192.70px;">21.05.2024, 06:52</span>
<span style="position:absolute;white-space:pre;line-height:1;font-size:8.6px;color:#fff;top:118.70px;letter-spacing:0.060px;left:280.20px;">folder</span>
<svg class="a" style="left:15.70px;top:130.10px" width="8.1" height="7.5" viewBox="0 0 10 10" preserveAspectRatio="none"><use href="#i-fold-s"/></svg>
<span style="position:absolute;white-space:pre;line-height:1;font-size:8.6px;color:#1c1c1c;top:129.70px;letter-spacing:-0.019px;left:29.00px;">articles</span>
<span style="position:absolute;white-space:pre;line-height:1;font-size:8.6px;color:#1c1c1c;top:129.70px;letter-spacing:-0.600px;right:499.35px;">DIR</span>
<span style="position:absolute;white-space:pre;line-height:1;font-size:8.6px;color:#1c1c1c;top:129.70px;letter-spacing:-0.025px;left:192.70px;">21.05.2024, 06:52</span>
<span style="position:absolute;white-space:pre;line-height:1;font-size:8.6px;color:#1c1c1c;top:129.70px;letter-spacing:0.060px;left:280.20px;">folder</span>
<svg class="a" style="left:15.70px;top:142.10px" width="8.1" height="7.5" viewBox="0 0 10 10" preserveAspectRatio="none"><use href="#i-fold-s"/></svg>
<span style="position:absolute;white-space:pre;line-height:1;font-size:8.6px;color:#1c1c1c;top:141.70px;letter-spacing:-0.006px;left:29.00px;">documents</span>
<span style="position:absolute;white-space:pre;line-height:1;font-size:8.6px;color:#1c1c1c;top:141.70px;letter-spacing:-0.600px;right:499.35px;">DIR</span>
<span style="position:absolute;white-space:pre;line-height:1;font-size:8.6px;color:#1c1c1c;top:141.70px;letter-spacing:-0.025px;left:192.70px;">21.05.2024, 06:50</span>
<span style="position:absolute;white-space:pre;line-height:1;font-size:8.6px;color:#1c1c1c;top:141.70px;letter-spacing:0.060px;left:280.20px;">folder</span>
<svg class="a" style="left:15.70px;top:153.10px" width="8.1" height="7.5" viewBox="0 0 10 10" preserveAspectRatio="none"><use href="#i-fold-s"/></svg>
<span style="position:absolute;white-space:pre;line-height:1;font-size:8.6px;color:#1c1c1c;top:152.70px;letter-spacing:-0.028px;left:29.00px;">invoice</span>
<span style="position:absolute;white-space:pre;line-height:1;font-size:8.6px;color:#1c1c1c;top:152.70px;letter-spacing:-0.600px;right:499.35px;">DIR</span>
<span style="position:absolute;white-space:pre;line-height:1;font-size:8.6px;color:#1c1c1c;top:152.70px;letter-spacing:-0.025px;left:192.70px;">21.05.2024, 06:51</span>
<span style="position:absolute;white-space:pre;line-height:1;font-size:8.6px;color:#1c1c1c;top:152.70px;letter-spacing:0.060px;left:280.20px;">folder</span>
<svg class="a" style="left:15.70px;top:165.10px" width="8.1" height="7.5" viewBox="0 0 10 10" preserveAspectRatio="none"><use href="#i-fold-s"/></svg>
<span style="position:absolute;white-space:pre;line-height:1;font-size:8.6px;color:#1c1c1c;top:164.70px;letter-spacing:0.043px;left:29.00px;">monthly report</span>
<span style="position:absolute;white-space:pre;line-height:1;font-size:8.6px;color:#1c1c1c;top:164.70px;letter-spacing:-0.600px;right:499.35px;">DIR</span>
<span style="position:absolute;white-space:pre;line-height:1;font-size:8.6px;color:#1c1c1c;top:164.70px;letter-spacing:-0.025px;left:192.70px;">21.05.2024, 06:51</span>
<span style="position:absolute;white-space:pre;line-height:1;font-size:8.6px;color:#1c1c1c;top:164.70px;letter-spacing:0.060px;left:280.20px;">folder</span>
<svg class="a" style="left:15.70px;top:176.10px" width="8.1" height="7.5" viewBox="0 0 10 10" preserveAspectRatio="none"><use href="#i-fold-s"/></svg>
<span style="position:absolute;white-space:pre;line-height:1;font-size:8.6px;color:#1c1c1c;top:175.70px;letter-spacing:0.044px;left:29.00px;">some stuff</span>
<span style="position:absolute;white-space:pre;line-height:1;font-size:8.6px;color:#1c1c1c;top:175.70px;letter-spacing:-0.600px;right:499.35px;">DIR</span>
<span style="position:absolute;white-space:pre;line-height:1;font-size:8.6px;color:#1c1c1c;top:175.70px;letter-spacing:-0.025px;left:192.70px;">21.05.2024, 06:52</span>
<span style="position:absolute;white-space:pre;line-height:1;font-size:8.6px;color:#1c1c1c;top:175.70px;letter-spacing:0.060px;left:280.20px;">folder</span>
<svg class="a" style="left:15.70px;top:188.10px" width="8.1" height="7.5" viewBox="0 0 10 10" preserveAspectRatio="none"><use href="#i-fold-s"/></svg>
<span style="position:absolute;white-space:pre;line-height:1;font-size:8.6px;color:#1c1c1c;top:187.70px;letter-spacing:0.004px;left:29.00px;">translations</span>
<span style="position:absolute;white-space:pre;line-height:1;font-size:8.6px;color:#1c1c1c;top:187.70px;letter-spacing:-0.600px;right:499.35px;">DIR</span>
<span style="position:absolute;white-space:pre;line-height:1;font-size:8.6px;color:#1c1c1c;top:187.70px;letter-spacing:-0.025px;left:192.70px;">21.05.2024, 06:52</span>
<span style="position:absolute;white-space:pre;line-height:1;font-size:8.6px;color:#1c1c1c;top:187.70px;letter-spacing:0.060px;left:280.20px;">folder</span>
<div class="a" style="left:0.00px;top:388.20px;width:340.40px;height:0.90px;background:#e6e6e6;"></div>
<div class="a" style="left:0.00px;top:389.10px;width:340.40px;height:12.00px;background:#fff;"></div>
<span style="position:absolute;white-space:pre;line-height:1;font-size:8.05px;color:#333;top:391.48px;letter-spacing:0.037px;left:94.90px;">0 bytes / 0 bytes in 0 / 0 file(s). 0 / 6 dir(s)</span>
<div class="a" style="left:340.00px;top:35.20px;width:0.90px;height:34.00px;background:#d2d2d2;"></div>
<div class="a" style="left:340.00px;top:69.10px;width:0.90px;height:332.00px;background:#bdbdbd;"></div>
<div class="a" style="left:341.20px;top:101.10px;width:340.80px;height:12.20px;background:#fff;"></div>
<div class="a" style="left:341.20px;top:113.30px;width:340.80px;height:0.90px;background:#d8d8d8;"></div>
<div class="a" style="left:341.20px;top:114.20px;width:340.80px;height:274.00px;background:#fff;"></div>
<div class="a" style="left:344.60px;top:102.40px;width:35.00px;height:8.90px;background:#d6d6d6;border-radius:2.5px"></div>
<span style="position:absolute;white-space:pre;line-height:1;font-size:7.2px;color:#fff;top:102.90px;font-weight:bold;letter-spacing:-0.227px;left:350.90px;">name</span>
<svg class="a" style="left:371.7px;top:104.9px" width="4.2" height="4" viewBox="0 0 4.2 4"><path d="M2.1 0.2 L4.1 3.8 L0.1 3.8 Z" fill="#222"/></svg>
<span style="position:absolute;white-space:pre;line-height:1;font-size:7.2px;color:#6b6b6b;top:102.90px;font-weight:bold;letter-spacing:-0.045px;left:389.10px;">extension</span>
<span style="position:absolute;white-space:pre;line-height:1;font-size:7.2px;color:#6b6b6b;top:102.90px;font-weight:bold;letter-spacing:0.035px;left:440.50px;">size</span>
<span style="position:absolute;white-space:pre;line-height:1;font-size:7.2px;color:#6b6b6b;top:102.90px;font-weight:bold;letter-spacing:0.021px;left:471.90px;">modified</span>
<span style="position:absolute;white-space:pre;line-height:1;font-size:7.2px;color:#6b6b6b;top:102.90px;font-weight:bold;letter-spacing:0.154px;left:519.50px;">created</span>
<span style="position:absolute;white-space:pre;line-height:1;font-size:7.2px;color:#6b6b6b;top:102.90px;font-weight:bold;letter-spacing:0.082px;left:563.50px;">added</span>
<span style="position:absolute;white-space:pre;line-height:1;font-size:7.2px;color:#6b6b6b;top:102.90px;font-weight:bold;letter-spacing:0.087px;left:602.50px;">opened</span>
<span style="position:absolute;white-space:pre;line-height:1;font-size:7.2px;color:#6b6b6b;top:102.90px;font-weight:bold;letter-spacing:0.073px;left:645.50px;">kind</span>
<svg class="a" style="left:361.85px;top:128.00px" width="42.8" height="37" viewBox="0 0 43 37"><use href="#bigfold"/><use href="#g-home" transform="translate(21.5 19.9) scale(1.08) translate(-21.5 -21.1)"/></svg>
<span style="position:absolute;white-space:pre;line-height:1;font-size:8.55px;color:#1e1e1e;top:174.72px;left:380.88px">..</span>
<svg class="a" style="left:446.85px;top:128.00px" width="42.8" height="37" viewBox="0 0 43 37"><use href="#bigfold"/><use href="#g-desktop" transform="translate(21.5 19.9) scale(1.08) translate(-21.5 -21.1)"/></svg>
<span style="position:absolute;white-space:pre;line-height:1;font-size:8.55px;color:#1c1c1c;top:174.72px;letter-spacing:-0.027px;left:452.80px;">Desktop</span>
<svg class="a" style="left:531.85px;top:128.00px" width="42.8" height="37" viewBox="0 0 43 37"><use href="#bigfold"/><use href="#g-none" transform="translate(21.5 19.9) scale(1.08) translate(-21.5 -21.1)"/></svg>
<span style="position:absolute;white-space:pre;line-height:1;font-size:8.55px;color:#1c1c1c;top:174.72px;letter-spacing:0.082px;left:527.00px;">Desktop copy</span>
<svg class="a" style="left:616.85px;top:128.00px" width="42.8" height="37" viewBox="0 0 43 37"><use href="#bigfold"/><use href="#g-doc" transform="translate(21.5 19.9) scale(1.08) translate(-21.5 -21.1)"/></svg>
<span style="position:absolute;white-space:pre;line-height:1;font-size:8.55px;color:#1c1c1c;top:174.72px;letter-spacing:-0.042px;left:616.90px;">Documents</span>
<svg class="a" style="left:361.85px;top:209.50px" width="42.8" height="37" viewBox="0 0 43 37"><use href="#bigfold"/><use href="#g-down" transform="translate(21.5 19.9) scale(1.08) translate(-21.5 -21.1)"/></svg>
<span style="position:absolute;white-space:pre;line-height:1;font-size:8.55px;color:#1c1c1c;top:256.73px;letter-spacing:-0.087px;left:362.40px;">Downloads</span>
<svg class="a" style="left:446.85px;top:209.50px" width="42.8" height="37" viewBox="0 0 43 37"><use href="#bigfold"/><use href="#g-movie" transform="translate(21.5 19.9) scale(1.08) translate(-21.5 -21.1)"/></svg>
<span style="position:absolute;white-space:pre;line-height:1;font-size:8.55px;color:#1c1c1c;top:256.73px;letter-spacing:-0.016px;left:454.90px;">Movies</span>
<svg class="a" style="left:531.85px;top:209.50px" width="42.8" height="37" viewBox="0 0 43 37"><use href="#bigfold"/><use href="#g-music" transform="translate(21.5 19.9) scale(1.08) translate(-21.5 -21.1)"/></svg>
<span style="position:absolute;white-space:pre;line-height:1;font-size:8.55px;color:#1c1c1c;top:256.73px;letter-spacing:0.068px;left:542.10px;">Music</span>
<svg class="a" style="left:616.85px;top:209.50px" width="42.8" height="37" viewBox="0 0 43 37"><use href="#bigfold"/><use href="#g-none" transform="translate(21.5 19.9) scale(1.08) translate(-21.5 -21.1)"/></svg>
<span style="position:absolute;white-space:pre;line-height:1;font-size:8.55px;color:#1c1c1c;top:256.73px;letter-spacing:0.008px;left:603.20px;">Nuctea Scandiaca</span>
<svg class="a" style="left:361.85px;top:291.00px" width="42.8" height="37" viewBox="0 0 43 37"><use href="#bigfold"/><use href="#g-pic" transform="translate(21.5 19.9) scale(1.08) translate(-21.5 -21.1)"/></svg>
<span style="position:absolute;white-space:pre;line-height:1;font-size:8.55px;color:#1e1e1e;top:337.73px;left:367.81px">Pictures</span>
<svg class="a" style="left:446.85px;top:291.00px" width="42.8" height="37" viewBox="0 0 43 37"><use href="#bigfold"/><use href="#g-public" transform="translate(21.5 19.9) scale(1.08) translate(-21.5 -21.1)"/></svg>
<span style="position:absolute;white-space:pre;line-height:1;font-size:8.55px;color:#1e1e1e;top:337.73px;left:456.61px">Public</span>
<div class="a" style="left:341.20px;top:388.20px;width:340.80px;height:0.90px;background:#e6e6e6;"></div>
<div class="a" style="left:341.20px;top:389.10px;width:340.80px;height:12.00px;background:#fff;"></div>
<span style="position:absolute;white-space:pre;line-height:1;font-size:8.05px;color:#333;top:391.48px;left:347.60px;">..</span>
<span style="position:absolute;white-space:pre;line-height:1;font-size:8.05px;color:#333;top:391.48px;letter-spacing:-0.600px;left:579.50px;">DIR</span>
<span style="position:absolute;white-space:pre;line-height:1;font-size:8.05px;color:#333;top:391.48px;letter-spacing:0.006px;left:598.30px;">21.05.2024, 08:03:54</span>
<div class="a" style="left:0.00px;top:401.10px;width:682.00px;height:0.90px;background:#e2e2e2;"></div>
<div class="a" style="left:0.00px;top:402.00px;width:682.00px;height:20.40px;background:#f4f4f4;"></div>
<span style="position:absolute;white-space:pre;line-height:1;font-size:8.8px;color:#222;top:408.60px;letter-spacing:0.127px;left:104.25px;">/Users/user/Nuctea Scandiaca</span>
<div class="a" style="left:233.30px;top:406.60px;width:441.70px;height:12.40px;background:#fff;border-radius:3px;box-shadow:0 0 0 0.5px rgba(0,0,0,.17),0 0.5px 1.2px rgba(0,0,0,.16)"></div>
<svg class="a" style="left:663px;top:407.2px" width="10.5" height="10.5" viewBox="0 0 10.5 10.5"><rect width="10.4" height="10.4" rx="2.5" fill="#1a74f4"/><path d="M3.2 4.3 L5.2 6.3 L7.2 4.3" fill="none" stroke="#fff" stroke-width="1.3" stroke-linecap="round" stroke-linejoin="round"/></svg>
<div class="a" style="left:0.00px;top:422.30px;width:682.00px;height:0.90px;background:#c9c9c9;"></div>
<div class="a" style="left:0.00px;top:423.20px;width:682.00px;height:19.40px;background:#f9f9f9;"></div>
<span style="position:absolute;white-space:pre;line-height:1;font-size:9.15px;color:#1e1e1e;top:429.43px;left:37.45px">View - F3</span>
<div class="a" style="left:112.77px;top:423.20px;width:0.90px;height:19.40px;background:#d2d2d2;"></div>
<span style="position:absolute;white-space:pre;line-height:1;font-size:9.15px;color:#1e1e1e;top:429.43px;left:153.06px">Edit - F4</span>
<div class="a" style="left:226.43px;top:423.20px;width:0.90px;height:19.40px;background:#d2d2d2;"></div>
<span style="position:absolute;white-space:pre;line-height:1;font-size:9.15px;color:#1e1e1e;top:429.43px;left:263.94px">Copy - F5</span>
<div class="a" style="left:340.10px;top:423.20px;width:0.90px;height:19.40px;background:#d2d2d2;"></div>
<span style="position:absolute;white-space:pre;line-height:1;font-size:9.15px;color:#1e1e1e;top:429.43px;left:377.09px">Move - F6</span>
<div class="a" style="left:453.77px;top:423.20px;width:0.90px;height:19.40px;background:#d2d2d2;"></div>
<span style="position:absolute;white-space:pre;line-height:1;font-size:9.15px;color:#1e1e1e;top:429.43px;left:478.59px">New Folder - F7</span>
<div class="a" style="left:567.43px;top:423.20px;width:0.90px;height:19.40px;background:#d2d2d2;"></div>
<span style="position:absolute;white-space:pre;line-height:1;font-size:9.15px;color:#1e1e1e;top:429.43px;left:602.40px">Delete - F8</span>
</div>
</body>
</html>
